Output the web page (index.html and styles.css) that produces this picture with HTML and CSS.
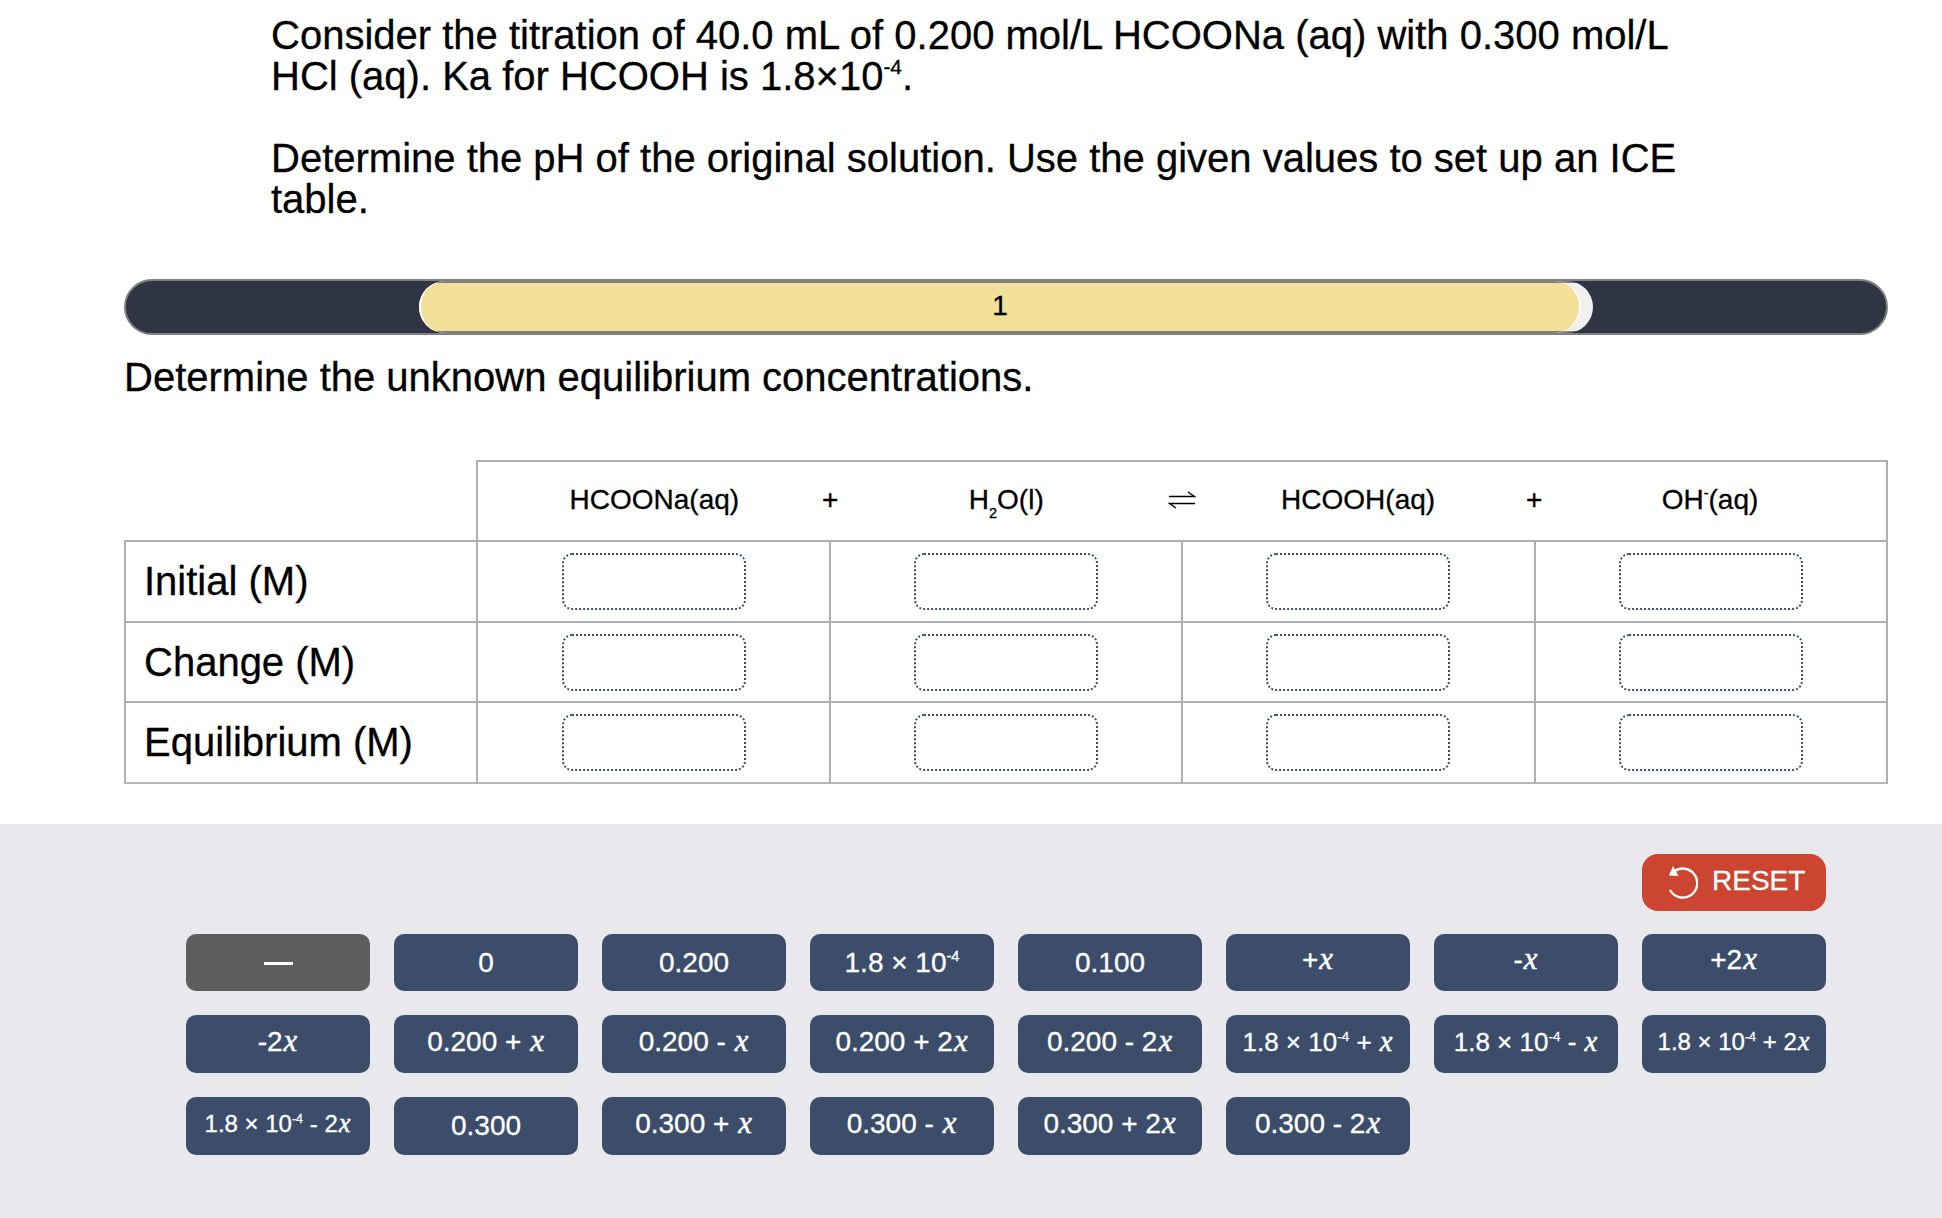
FILE: index.html
```html
<!DOCTYPE html>
<html lang="en">
<head>
    <meta charset="UTF-8">
    <meta name="viewport" content="width=device-width, initial-scale=1.0">
    <title>ICE Table</title>
    <link rel="stylesheet" href="styles.css">
</head>
<body>
    <main class="question">
        <div class="prompt">
            <p>Consider the titration of 40.0 mL of 0.200 mol/L HCOONa (aq) with 0.300 mol/L<br>HCl (aq). Ka for HCOOH is 1.8×10<sup>-4</sup>.</p>
            <p>Determine the pH of the original solution. Use the given values to set up an ICE<br>table.</p>
        </div>

        <div class="progress">
            <div class="step-next">
                <div class="step">1</div>
            </div>
        </div>

        <h1>Determine the unknown equilibrium concentrations.</h1>

        <div class="ice-table">
            <div class="corner"></div>
            <div class="equation">
                <div class="species">HCOONa(aq)<span class="operator">+</span></div>
                <div class="species">H<sub>2</sub>O(l)
                    <span class="operator">
                        <svg width="28" height="18" viewBox="0 0 28 18">
                            <path d="M1 5.5H26.5L20 1M27 12.5H1.5L8 17" fill="none" stroke="#000" stroke-width="1.5"/>
                        </svg>
                    </span>
                </div>
                <div class="species">HCOOH(aq)<span class="operator">+</span></div>
                <div class="species">OH<sup>-</sup>(aq)</div>
            </div>

            <div class="cell label">Initial (M)</div>
            <div class="cell"><div class="slot"></div></div>
            <div class="cell"><div class="slot"></div></div>
            <div class="cell"><div class="slot"></div></div>
            <div class="cell"><div class="slot"></div></div>

            <div class="cell label">Change (M)</div>
            <div class="cell"><div class="slot"></div></div>
            <div class="cell"><div class="slot"></div></div>
            <div class="cell"><div class="slot"></div></div>
            <div class="cell"><div class="slot"></div></div>

            <div class="cell label">Equilibrium (M)</div>
            <div class="cell"><div class="slot"></div></div>
            <div class="cell"><div class="slot"></div></div>
            <div class="cell"><div class="slot"></div></div>
            <div class="cell"><div class="slot"></div></div>
        </div>
    </main>

    <section class="bank">
        <button class="reset">
            <svg width="30" height="34" viewBox="0 0 30 34">
                <path d="M6 5.5A14.5 14.5 0 1 1 2 24" fill="none" stroke="#fff" stroke-width="2.4"/>
                <path d="M5 0L1 9.5L10.5 10Z" fill="#fff"/>
            </svg>
            RESET
        </button>
        <div class="tiles">
            <div class="tile used"><span class="dash"></span></div>
            <div class="tile">0</div>
            <div class="tile">0.200</div>
            <div class="tile power"><span>1.8 × 10<sup>-4</sup></span></div>
            <div class="tile">0.100</div>
            <div class="tile math first"><span>+<i>x</i></span></div>
            <div class="tile math first"><span>-<i>x</i></span></div>
            <div class="tile math first"><span>+2<i>x</i></span></div>

            <div class="tile math"><span>-2<i>x</i></span></div>
            <div class="tile math"><span>0.200 + <i>x</i></span></div>
            <div class="tile math"><span>0.200 - <i>x</i></span></div>
            <div class="tile math"><span>0.200 + 2<i>x</i></span></div>
            <div class="tile math"><span>0.200 - 2<i>x</i></span></div>
            <div class="tile math medium"><span>1.8 × 10<sup>-4</sup> + <i>x</i></span></div>
            <div class="tile math medium"><span>1.8 × 10<sup>-4</sup> - <i>x</i></span></div>
            <div class="tile math small"><span>1.8 × 10<sup>-4</sup> + 2<i>x</i></span></div>

            <div class="tile math small"><span>1.8 × 10<sup>-4</sup> - 2<i>x</i></span></div>
            <div class="tile">0.300</div>
            <div class="tile math"><span>0.300 + <i>x</i></span></div>
            <div class="tile math"><span>0.300 - <i>x</i></span></div>
            <div class="tile math"><span>0.300 + 2<i>x</i></span></div>
            <div class="tile math"><span>0.300 - 2<i>x</i></span></div>
        </div>
    </section>
</body>
</html>
```
FILE: styles.css
```css
* {
    box-sizing: border-box;
}
body {
    margin: 0;
    min-height: 100vh;
    display: flex;
    flex-direction: column;
    background: white;
    color: #000;
    font-family: Arial, "Liberation Sans", sans-serif;
    font-size: 28px;
    -webkit-text-stroke: 0.3px;
}
sup, sub {
    font-size: 0.52em;
    line-height: 0;
    vertical-align: baseline;
    position: relative;
}
sup {
    top: -0.75em;
}
sub {
    top: 0.6em;
}
.question {
    height: 824px;
    padding: 15px 54px 0 124px;
}
.prompt {
    height: 264px;
    padding-left: 147px;
    font-size: 40px;
    line-height: 41px;
    white-space: nowrap;
}
.prompt p {
    margin: 0 0 41px;
}
.progress {
    height: 56px;
    padding-left: 293px;
    background: #2f3542;
    border: 2px solid #808080;
    border-radius: 28px;
}
.step-next {
    width: 1174px;
    height: 52px;
    background: linear-gradient(#808080 2px, #f0f0f0 2px, #f0f0f0 50px, #808080 50px);
    border-radius: 26px;
}
.step {
    width: 1162px;
    height: 52px;
    line-height: 50px;
    text-align: center;
    background: linear-gradient(#808080 2px, #f2df98 2px, #f2df98 50px, #808080 50px);
    border-left: 2px solid #fff;
    border-right: 2px solid #fff;
    border-radius: 26px;
}
h1 {
    height: 125px;
    margin: 0;
    padding-top: 22px;
    font-size: 40px;
    font-weight: normal;
    line-height: 41px;
}
.ice-table {
    width: 1764px;
    display: grid;
    grid-template-columns: repeat(5, 352.4px);
    grid-template-rows: 80px 81px 80px 83px;
}
.equation {
    grid-column: span 4;
    width: 1411.6px;
    display: grid;
    grid-template-columns: repeat(4, 351.9px);
    border: 2px solid #b0b0b0;
    border-bottom: none;
}
.species {
    position: relative;
    line-height: 76px;
    text-align: center;
    white-space: nowrap;
}
/* sits on the line between two columns */
.operator {
    position: absolute;
    top: 0;
    right: 0;
    transform: translateX(50%);
}
.cell {
    width: 354.4px;
    display: flex;
    justify-content: center;
    padding-top: 11px;
    border: 2px solid #b0b0b0;
    border-bottom: none;
}
.cell:nth-last-child(-n+5) {
    border-bottom: 2px solid #b8b8b8;
}
.label {
    justify-content: flex-start;
    padding: 0 0 0 18px;
    font-size: 40px;
    line-height: 78px;
}
.slot {
    width: 184px;
    height: 57px;
    border: 2px dotted #3b4d6b;
    border-radius: 10px;
}
.bank {
    flex: 1;
    display: flex;
    flex-direction: column;
    padding: 30px 116px 0 186px;
    background: #e9e9ed;
}
.reset {
    align-self: flex-end;
    width: 184px;
    height: 57px;
    display: flex;
    align-items: center;
    gap: 14px;
    padding: 0 0 3px 26px;
    background: #cb4530;
    color: #fff;
    border: none;
    border-radius: 16px;
    font: inherit;
}
.reset svg {
    margin-top: 4px;
}
.tiles {
    margin-top: 23px;
    display: grid;
    grid-template-columns: repeat(8, 184px);
    grid-template-rows: 57px 58px 58px;
    gap: 24px;
}
.tile {
    display: flex;
    align-items: center;
    justify-content: center;
    background: #3b4d6b;
    color: #fff;
    border-radius: 10px;
    line-height: 28px;
    white-space: nowrap;
}
.tile i {
    font-family: "Liberation Serif", serif;
    font-size: 1.1em;
    line-height: 0;
    margin: 0 1px;
    -webkit-text-stroke: 0.5px;
}
.used {
    background: #5e5e5e;
}
.dash {
    width: 29px;
    height: 3px;
    margin-top: 1px;
    background: #fff;
}
.power {
    padding-top: 1px;
}
.math {
    padding-bottom: 5px;
}
.first {
    padding-bottom: 6px;
}
.medium {
    font-size: 26px;
    padding-bottom: 4px;
}
.small {
    font-size: 24px;
    padding-bottom: 4px;
}
```
